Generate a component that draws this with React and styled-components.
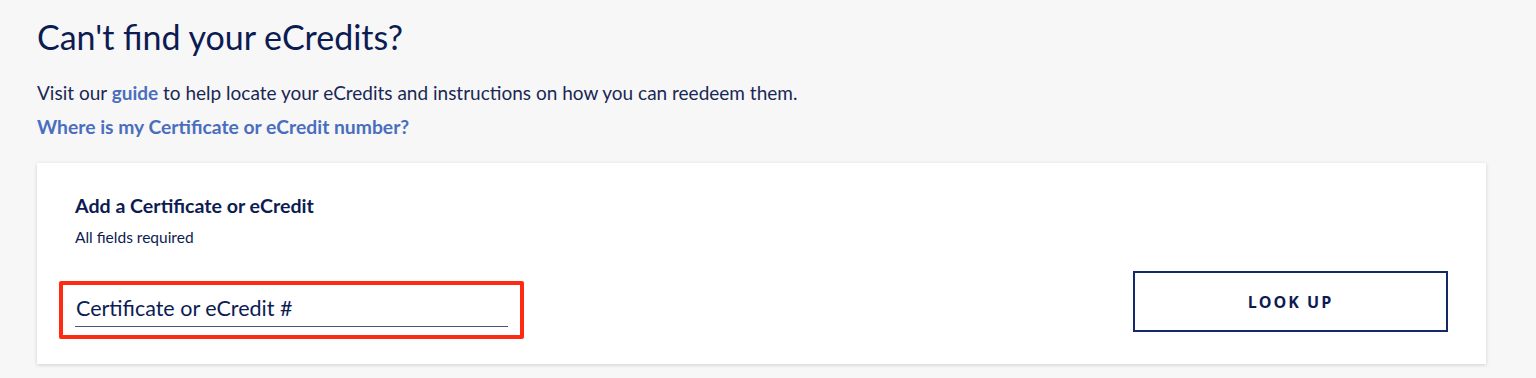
import React from 'react';
import styled, { createGlobalStyle } from 'styled-components';

const GlobalStyle = createGlobalStyle`
  body {
    margin: 0;
    background: #f7f7f7;
    font-family: Lato, "Open Sans", sans-serif;
    color: #0e1f56;
  }
`;

const Page = styled.div`
  padding: 16px 50px 14px 37px;
`;

const Title = styled.h1`
  margin: 0;
  font-size: 34px;
  font-weight: 400;
  line-height: 42px;
  color: #0c1c52;
`;

const Text = styled.p`
  margin: 23px 0 0;
  font-size: 19px;
  line-height: 24px;
  color: #1a2755;
`;

const Link = styled.a`
  color: #4a6ebf;
  font-weight: 700;
  text-decoration: none;
  font-size: ${p => (p.$block ? '19.3px' : '19px')};
  line-height: 24px;
  display: ${p => (p.$block ? 'block' : 'inline')};
  margin-top: ${p => (p.$block ? '10px' : '0')};
`;

const Card = styled.div`
  margin-top: 24px;
  background: #fff;
  box-shadow: 0 1px 4px rgba(0, 0, 0, 0.16);
  padding: 31px 38px 32px 38px;
  display: flex;
  justify-content: space-between;
  align-items: flex-end;
`;

const FormCol = styled.div`
  display: flex;
  flex-direction: column;
`;

const CardTitle = styled.h2`
  margin: 0;
  font-size: 19.6px;
  font-weight: 700;
  line-height: 24px;
  color: #0c1c52;
`;

const Hint = styled.div`
  margin-top: 9px;
  font-size: 15.5px;
  line-height: 20px;
  color: #0c1c52;
`;

const Field = styled.div`
  position: relative;
  margin-top: 47px;
  margin-bottom: 5px;
  width: 433px;
`;

const Input = styled.input`
  display: block;
  box-sizing: border-box;
  width: 100%;
  border: 0;
  border-bottom: 1px solid #4c5478;
  background: transparent;
  padding: 0 0 4px 1px;
  font-family: Lato, "Open Sans", sans-serif;
  font-size: 21.5px;
  line-height: 28px;
  height: 33px;
  color: #0c1c52;
  outline: none;
  &::placeholder {
    color: #0c1c52;
    opacity: 1;
  }
`;

const Highlight = styled.div`
  position: absolute;
  left: -16px;
  right: -16px;
  top: -13px;
  bottom: -12px;
  border: 4px solid #ff2a12;
  border-radius: 2px;
  pointer-events: none;
`;

const Button = styled.button`
  box-sizing: border-box;
  width: 315px;
  height: 61px;
  background: #fff;
  border: 2px solid #14296b;
  color: #0c1c52;
  font-family: "Open Sans", Lato, sans-serif;
  font-size: 16px;
  font-weight: 700;
  letter-spacing: 2px;
  cursor: pointer;
`;

export default function App() {
  return (
    <>
      <GlobalStyle />
      <Page>
        <Title>Can't find your eCredits?</Title>
        <Text>
          Visit our <Link href="#">guide</Link> to help locate your eCredits and instructions on how you can reedeem them.
        </Text>
        <Link href="#" $block>Where is my Certificate or eCredit number?</Link>
        <Card>
          <FormCol>
            <CardTitle>Add a Certificate or eCredit</CardTitle>
            <Hint>All fields required</Hint>
            <Field>
              <Input placeholder="Certificate or eCredit #" />
              <Highlight />
            </Field>
          </FormCol>
          <Button>LOOK UP</Button>
        </Card>
      </Page>
    </>
  );
}
